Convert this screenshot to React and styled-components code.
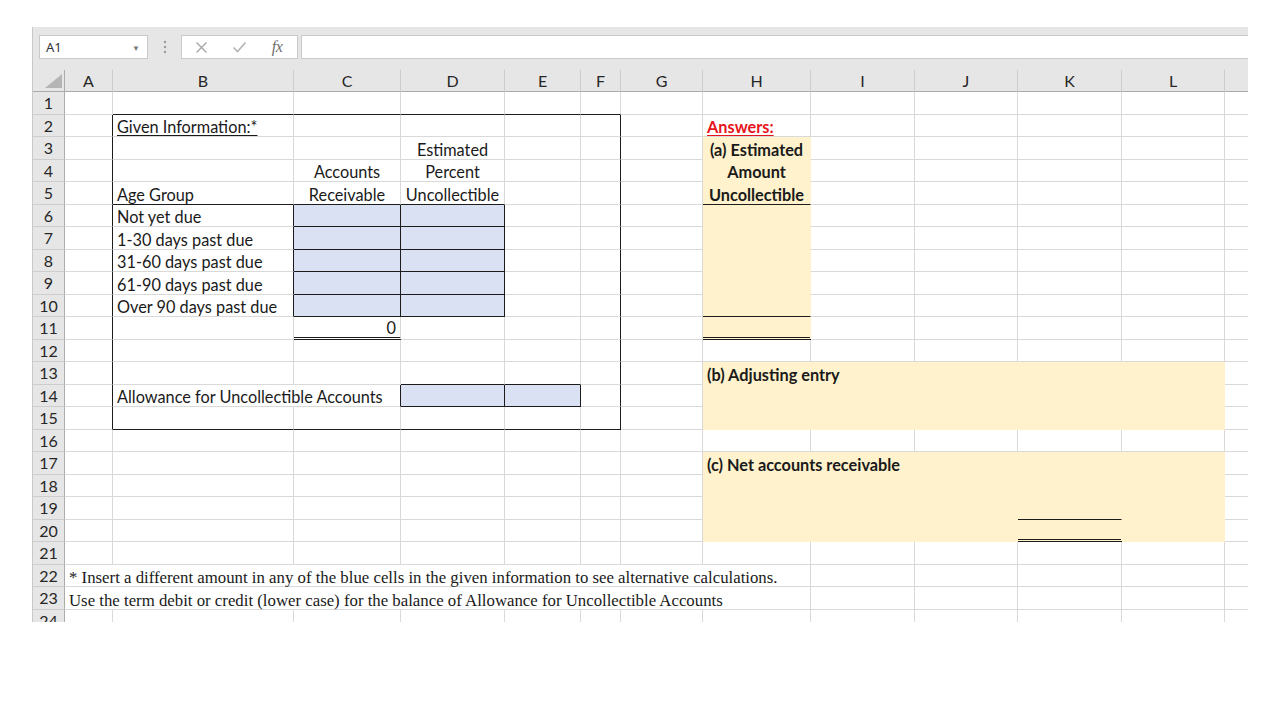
import React from "react";
import styled, { createGlobalStyle } from "styled-components";

const GlobalStyle = createGlobalStyle`
  html, body {
    margin: 0;
    padding: 0;
    background: #ffffff;
  }
  body {
    font-family: "Lato", "Liberation Sans", sans-serif;
    color: #1a1a1a;
  }
`;

const COLUMNS = [
  { key: "A", w: 48 },
  { key: "B", w: 181 },
  { key: "C", w: 107 },
  { key: "D", w: 104 },
  { key: "E", w: 76 },
  { key: "F", w: 40 },
  { key: "G", w: 82 },
  { key: "H", w: 108 },
  { key: "I", w: 104 },
  { key: "J", w: 103 },
  { key: "K", w: 104 },
  { key: "L", w: 103 },
  { key: "M", w: 24, hideLabel: true },
];

const ROW_COUNT = 24;
const ROW_H = 22.5;

const LINE = {
  grid: "1px solid #d9d9d9",
  none: "1px solid transparent",
  thin: "1px solid #1c1c1c",
  double: "3px double #1c1c1c",
};

const FILL = {
  blue: "#d9e1f2",
  yellow: "#fff2cc",
};

// sheet contents, keyed by cell reference
const cells = {};
const set = (ref, props) => {
  cells[ref] = { ...(cells[ref] || {}), ...props };
};

// outline of the "given information" block, B2:F15
["B", "C", "D", "E", "F"].forEach((c) => {
  set(`${c}1`, { bottom: "thin" });
  set(`${c}15`, { bottom: "thin" });
});
for (let r = 2; r <= 15; r++) {
  set(`A${r}`, { right: "thin" });
  set(`F${r}`, { right: "thin" });
}

set("B2", { text: "Given Information:*", underline: true });
set("D3", { text: "Estimated", align: "center" });
set("C4", { text: "Accounts", align: "center" });
set("D4", { text: "Percent", align: "center" });
set("B5", { text: "Age Group", bottom: "thin" });
set("C5", { text: "Receivable", align: "center", bottom: "thin" });
set("D5", { text: "Uncollectible", align: "center", bottom: "thin" });

const ageGroups = [
  "Not yet due",
  "1-30 days past due",
  "31-60 days past due",
  "61-90 days past due",
  "Over 90 days past due",
];
ageGroups.forEach((label, i) => {
  const r = 6 + i;
  set(`B${r}`, { text: label, right: "thin" });
  set(`C${r}`, { fill: "blue", right: "thin", bottom: "thin" });
  set(`D${r}`, { fill: "blue", right: "thin", bottom: "thin" });
});
set("C11", { text: "0", align: "right", bottom: "double" });

set("D13", { bottom: "thin" });
set("E13", { bottom: "thin" });
set("B14", { text: "Allowance for Uncollectible Accounts", span: 2, right: "thin" });
set("D14", { fill: "blue", right: "thin", bottom: "thin" });
set("E14", { fill: "blue", right: "thin", bottom: "thin" });

// answer area
set("H2", { text: "Answers:", bold: true, underline: true, color: "#e8141b" });
for (let r = 3; r <= 11; r++) set(`H${r}`, { fill: "yellow" });
set("H3", { text: "(a) Estimated", bold: true, align: "center" });
set("H4", { text: "Amount", bold: true, align: "center" });
set("H5", { text: "Uncollectible", bold: true, align: "center", bottom: "thin" });
set("H10", { bottom: "thin" });
set("H11", { bottom: "double" });

["H", "I", "J", "K", "L"].forEach((c) => {
  for (let r = 13; r <= 15; r++) set(`${c}${r}`, { fill: "yellow" });
  for (let r = 17; r <= 20; r++) set(`${c}${r}`, { fill: "yellow" });
});
// headings of the answer blocks run across the whole block
set("H13", { text: "(b) Adjusting entry", bold: true, span: 5 });
set("H17", { text: "(c) Net accounts receivable", bold: true, span: 5 });
set("K19", { bottom: "thin" });
set("K20", { bottom: "double" });

set("A22", {
  text: "* Insert a different amount in any of the blue cells in the given information to see alternative calculations.",
  serif: true,
  span: 8,
});
set("A23", {
  text: "Use the term debit or credit (lower case) for the balance of Allowance for Uncollectible Accounts",
  serif: true,
  span: 8,
});

const Window = styled.div`
  margin: 27px 0 0 32px;
  width: 1216px;
  border-left: 1px solid #c8c8c8;
  box-sizing: border-box;
  background: #e6e6e6;
`;

const FormulaBar = styled.div`
  display: flex;
  align-items: center;
  height: 43px;
  padding: 8px 0 11px 6px;
  box-sizing: border-box;
`;

const Field = styled.div`
  height: 24px;
  box-sizing: border-box;
  background: #ffffff;
  border: 1px solid #c9c9c9;
  display: flex;
  align-items: center;
`;

const NameBox = styled(Field)`
  width: 109px;
  padding: 0 7px 0 6px;
  justify-content: space-between;
  font-family: "Noto Sans", "Open Sans", sans-serif;
  font-size: 13px;
  color: #333;
`;

const Caret = styled.span`
  font-size: 8px;
  color: #7a7a7a;
`;

const Grip = styled.div`
  width: 33px;
  display: flex;
  justify-content: center;
`;

const FxBox = styled(Field)`
  width: 117px;
  padding-left: 0;
`;

const FxSlot = styled.div`
  width: 38px;
  display: flex;
  justify-content: center;
  align-items: center;
`;

const FxLabel = styled.span`
  font-family: "Liberation Serif", "DejaVu Serif", serif;
  font-style: italic;
  font-size: 16px;
  color: #6e6e6e;
  letter-spacing: -0.5px;
`;

const FormulaInput = styled(Field)`
  flex: 1;
  margin-left: 3px;
  border-right: none;
`;

const Sheet = styled.div`
  display: grid;
  grid-template-columns: 32px ${COLUMNS.map((c) => `${c.w}px`).join(" ")};
  grid-template-rows: 22px repeat(${ROW_COUNT}, ${ROW_H}px);
  height: 552px;
  overflow: hidden;
  background: #ffffff;
`;

const Corner = styled.div`
  background: #e6e6e6;
  border-right: 1px solid #ababab;
  border-bottom: 1px solid #ababab;
  box-sizing: border-box;
  display: flex;
  align-items: flex-end;
  justify-content: flex-end;
  padding: 0 2px 3px 0;
`;

const ColHead = styled.div`
  background: #e6e6e6;
  border-right: 1px solid #cdcdcd;
  border-bottom: 1px solid #ababab;
  box-sizing: border-box;
  display: flex;
  align-items: center;
  justify-content: center;
  font-size: 16px;
  color: #262626;
`;

const RowHead = styled.div`
  background: #e6e6e6;
  border-right: 1px solid #ababab;
  border-bottom: 1px solid #cdcdcd;
  box-sizing: border-box;
  display: flex;
  align-items: center;
  justify-content: center;
  font-size: 16px;
  color: #262626;
`;

const Cell = styled.div`
  box-sizing: border-box;
  grid-column: span ${(p) => p.$span};
  background: ${(p) => (p.$fill ? FILL[p.$fill] : "transparent")};
  border-right: ${(p) => LINE[p.$right]};
  border-bottom: ${(p) => LINE[p.$bottom]};
  display: flex;
  align-items: flex-end;
  justify-content: ${(p) =>
    p.$align === "center" ? "center" : p.$align === "right" ? "flex-end" : "flex-start"};
  padding: 0 4px;
  white-space: nowrap;
  overflow: visible;
  font-family: ${(p) =>
    p.$serif ? `"Liberation Serif", "Times New Roman", serif` : `"Lato", "Liberation Sans", sans-serif`};
  font-size: ${(p) => (p.$serif ? "16.8px" : "16.3px")};
  line-height: ${(p) => (p.$serif ? "16px" : "18px")};
  font-weight: ${(p) => (p.$bold ? 700 : 400)};
  color: ${(p) => p.$color || "#1a1a1a"};
`;

const Text = styled.span`
  text-decoration: ${(p) => (p.$underline ? "underline" : "none")};
  text-underline-offset: 2px;
`;

const CloseIcon = () => (
  <svg width="13" height="13" viewBox="0 0 13 13">
    <path d="M1.5 1.5 L11.5 11.5 M11.5 1.5 L1.5 11.5" stroke="#a6a6a6" strokeWidth="1.4" fill="none" />
  </svg>
);

const CheckIcon = () => (
  <svg width="15" height="12" viewBox="0 0 15 12">
    <path d="M1.5 6.5 L5.5 10.5 L13.5 1.5" stroke="#b3b3b3" strokeWidth="1.6" fill="none" />
  </svg>
);

const GripIcon = () => (
  <svg width="4" height="14" viewBox="0 0 4 14">
    <circle cx="2" cy="2" r="1.2" fill="#9a9a9a" />
    <circle cx="2" cy="7" r="1.2" fill="#9a9a9a" />
    <circle cx="2" cy="12" r="1.2" fill="#9a9a9a" />
  </svg>
);

const SelectAll = () => (
  <svg width="17" height="14" viewBox="0 0 17 14">
    <polygon points="17,0 17,14 0,14" fill="#b5b5b5" />
  </svg>
);

const fillBorder = (spec, side) => {
  if (spec[side]) return spec[side];
  return spec.fill ? "none" : "grid";
};

function SheetRow({ row }) {
  const out = [<RowHead key="h">{row}</RowHead>];
  let i = 0;
  while (i < COLUMNS.length) {
    const ref = `${COLUMNS[i].key}${row}`;
    const spec = cells[ref] || {};
    const span = spec.span || 1;
    out.push(
      <Cell
        key={ref}
        $span={span}
        $fill={spec.fill}
        $right={fillBorder(spec, "right")}
        $bottom={fillBorder(spec, "bottom")}
        $align={spec.align}
        $bold={spec.bold}
        $color={spec.color}
        $serif={spec.serif}
      >
        {spec.text && <Text $underline={spec.underline}>{spec.text}</Text>}
      </Cell>
    );
    i += span;
  }
  return out;
}

export default function App() {
  const rows = Array.from({ length: ROW_COUNT }, (_, i) => i + 1);
  return (
    <>
      <GlobalStyle />
      <Window>
        <FormulaBar>
          <NameBox>
            <span>A1</span>
            <Caret>▼</Caret>
          </NameBox>
          <Grip>
            <GripIcon />
          </Grip>
          <FxBox>
            <FxSlot>
              <CloseIcon />
            </FxSlot>
            <FxSlot>
              <CheckIcon />
            </FxSlot>
            <FxSlot>
              <FxLabel>fx</FxLabel>
            </FxSlot>
          </FxBox>
          <FormulaInput />
        </FormulaBar>
        <Sheet>
          <Corner>
            <SelectAll />
          </Corner>
          {COLUMNS.map((c) => (
            <ColHead key={c.key}>{c.hideLabel ? "" : c.key}</ColHead>
          ))}
          {rows.map((r) => (
            <SheetRow key={r} row={r} />
          ))}
        </Sheet>
      </Window>
    </>
  );
}
